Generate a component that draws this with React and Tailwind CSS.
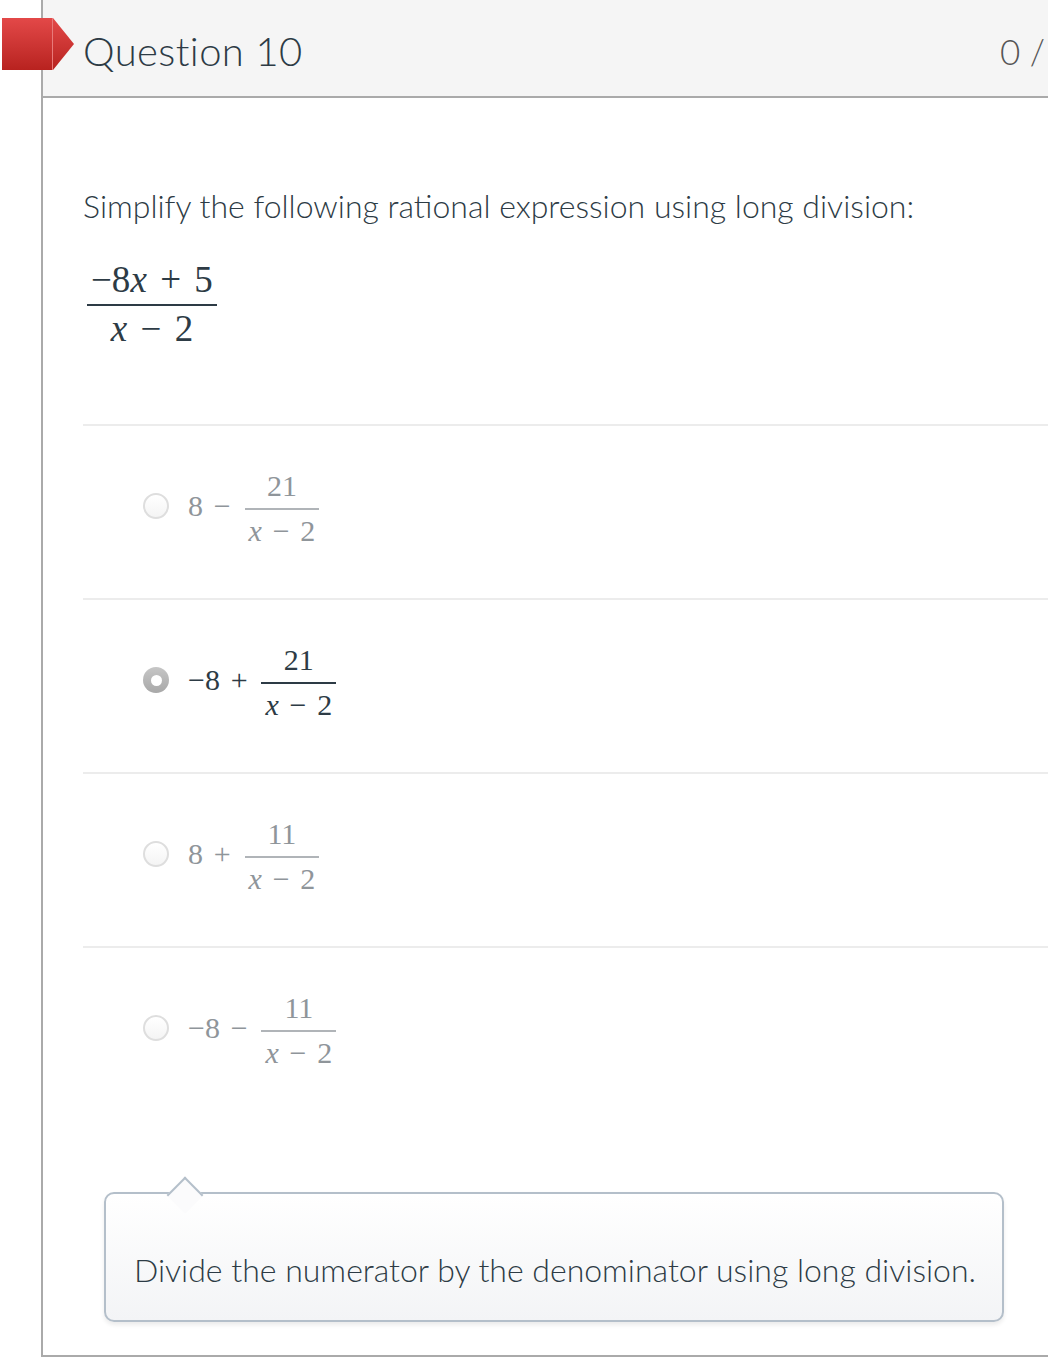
import React from 'react';

const lato = { fontFamily: 'Lato, "Open Sans", sans-serif' };
const serif = { fontFamily: '"Liberation Serif", "Times New Roman", serif' };

function Op({ children }) {
    return <span className="mx-[0.36em]">{children}</span>;
}

function Frac({ num, den, lineClass, className = '' }) {
    return (
        <span className={`inline-flex flex-col items-stretch align-middle ${className}`}>
            <span className={`text-center px-[4px] pb-[6px] border-b-2 ${lineClass}`}>{num}</span>
            <span className="text-center px-[4px] pt-[5px]">{den}</span>
        </span>
    );
}

function Radio({ checked }) {
    if (checked) {
        return (
            <span className="w-[26px] h-[26px] rounded-full bg-gradient-to-b from-[#c6c6c6] to-[#a8a8a8] flex items-center justify-center shrink-0">
                <span className="w-[11px] h-[11px] rounded-full bg-white" />
            </span>
        );
    }
    return (
        <span className="w-[26px] h-[26px] rounded-full border-2 border-[#dedede] bg-gradient-to-b from-white to-[#f4f4f4] shrink-0" />
    );
}

const den = (<><i>x</i><Op>−</Op>2</>);

const answers = [
    { lead: <>8<Op>−</Op></>, num: '21', checked: false },
    { lead: <>−8<Op>+</Op></>, num: '21', checked: true },
    { lead: <>8<Op>+</Op></>, num: '11', checked: false },
    { lead: <>−8<Op>−</Op></>, num: '11', checked: false },
];

function Answer({ a }) {
    const color = a.checked ? 'text-[#2d3b45]' : 'text-[#8f959a]';
    const line = a.checked ? 'border-[#2d3b45]' : 'border-[#b0b4b8]';
    return (
        <div className="h-[174px] border-t-2 border-[#ececec] flex items-center pl-[60px] pb-[12px]">
            <Radio checked={a.checked} />
            <div className={`ml-[19px] flex items-center text-[30px] leading-[32px] ${color}`} style={serif}>
                <span>{a.lead}</span>
                <Frac num={a.num} den={den} lineClass={line} className="mt-[4px] ml-[3px]" />
            </div>
        </div>
    );
}

export default function App() {
    return (
        <div className="w-[1048px] h-[1370px] overflow-hidden bg-white" style={lato}>
            <div className="relative ml-[41px] w-[1100px] border-l-2 border-b-2 border-[#aaaaaa]">
                {/* header */}
                <div className="h-[98px] bg-[#f5f5f5] border-b-2 border-[#aaaaaa] flex items-center pl-[40px] pt-[6px]">
                    <h2 className="text-[40px] font-light text-[#2d3b45] tracking-[0.4px]">Question 10</h2>
                    <span className="ml-auto mr-[96px] text-[35px] font-light text-[#555]">0 /</span>
                </div>
                {/* red flag */}
                <div className="absolute left-[-41px] top-[18px] flex">
                    <div className="w-[51px] h-[52px] bg-gradient-to-b from-[#e34848] to-[#b8221f] border-r border-[#e87a7a]" />
                    <div className="w-[21px] h-[52px] bg-gradient-to-b from-[#e34848] to-[#b8221f] [clip-path:polygon(0_0,100%_50%,0_100%)]" />
                </div>

                <div className="pl-[40px]">
                    <p className="mt-[88px] text-[32px] font-light leading-[40px] text-[#2d3b45]">
                        Simplify the following rational expression using long division:
                    </p>
                    <div className="mt-[36px] text-[37px] leading-[36px] text-[#2d3b45]" style={serif}>
                        <Frac num={<>−8<i>x</i><Op>+</Op>5</>} den={den} lineClass="border-[#2d3b45]" className="ml-[4px]" />
                    </div>

                    <div className="mt-[77px]">
                        {answers.map((a, i) => <Answer key={i} a={a} />)}
                    </div>

                    <div className="mt-[72px] ml-[21px] mb-[33px] w-[900px] relative">
                        <div className="absolute left-[68px] top-[-10px] w-[26px] h-[26px] rotate-45 bg-[#fbfbfc] border-l-2 border-t-2 border-[#b4bfca]" />
                        <div className="h-[130px] rounded-[10px] border-2 border-[#b4bfca] bg-gradient-to-b from-white to-[#f3f4f6] shadow-[0_3px_4px_rgba(0,0,0,0.08)] flex items-center pl-[28px] pt-[26px]">
                            <p className="text-[32px] font-light text-[#2d3b45]">Divide the numerator by the denominator using long division.</p>
                        </div>
                    </div>
                </div>
            </div>
        </div>
    );
}
